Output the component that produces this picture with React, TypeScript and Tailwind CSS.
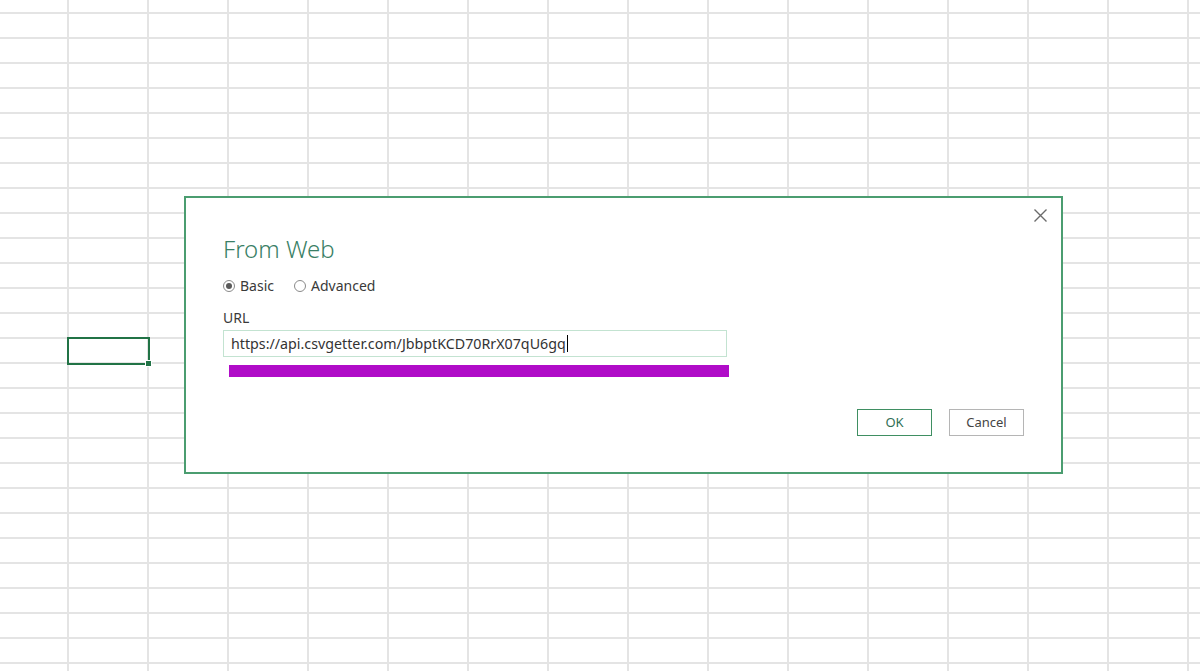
import React from 'react';

const COLS = 16;
const ROWS = 28;

const SheetGrid: React.FC = () => (
  <div className="grid grid-cols-[69px_repeat(15,80px)] grid-rows-[14px_repeat(27,25px)]">
    {Array.from({ length: COLS * ROWS }).map((_, i) => (
      <div key={i} className="border-r-2 border-b-2 border-[#e4e4e4]" />
    ))}
  </div>
);

const Radio: React.FC<{ label: string; checked?: boolean }> = ({ label, checked }) => (
  <label className="flex items-center gap-[5px]">
    <span className="flex h-[12px] w-[12px] items-center justify-center rounded-full border border-[#8a8a8a] bg-white">
      {checked && <span className="h-[6px] w-[6px] rounded-full bg-[#5a5a5a]" />}
    </span>
    <span>{label}</span>
  </label>
);

const FromWebDialog: React.FC = () => (
  <div className="absolute left-[184px] top-[196px] h-[278px] w-[879px] border-2 border-[#4b9d70] bg-white font-['Noto_Sans',sans-serif] text-[#3a3a3a]">
    <button className="absolute right-[13px] top-[10px] text-[#6b6b6b]">
      <svg width="15" height="15" viewBox="0 0 15 15" fill="none" stroke="currentColor" strokeWidth="1.4">
        <path d="M1.5 1.5 L13.5 13.5 M13.5 1.5 L1.5 13.5" />
      </svg>
    </button>

    <div className="flex flex-col pl-[37px] pr-[36px] pt-[35px]">
      <h1 className="text-[24px] font-light leading-[32px] text-[#3a7f66]">From Web</h1>

      <div className="mt-[11px] flex items-center gap-[20px] text-[14px] leading-[20px]">
        <Radio label="Basic" checked />
        <Radio label="Advanced" />
      </div>

      <div className="mt-[12px] text-[14px] leading-[20px]">URL</div>

      <div className="mt-[2px] flex h-[27px] w-[504px] items-center border border-[#c3e3d1] px-[7px] text-[14.25px] text-[#333]">
        <span>https://api.csvgetter.com/JbbptKCD70RrX07qU6gq</span>
        <span className="ml-[1px] h-[17px] w-[1px] bg-black" />
      </div>

      <div className="ml-[6px] mt-[8px] h-[12px] w-[500px] bg-[#b00cc8]" />

      <div className="mt-[32px] flex justify-end gap-[17px] pr-[1px] text-[13px]">
        <button className="h-[27px] w-[75px] border border-[#3f8f62] text-[#2f6f55]">OK</button>
        <button className="h-[27px] w-[75px] border border-[#b5b5b5] text-[#444]">Cancel</button>
      </div>
    </div>
  </div>
);

export default function App() {
  return (
    <div className="relative h-[671px] w-[1200px] overflow-hidden bg-white">
      <SheetGrid />
      <div className="absolute left-[67px] top-[337px] h-[28px] w-[83px] border-2 border-[#217346]">
        <span className="absolute -bottom-[4px] -right-[4px] h-[7px] w-[7px] border border-white bg-[#217346]" />
      </div>
      <FromWebDialog />
    </div>
  );
}
